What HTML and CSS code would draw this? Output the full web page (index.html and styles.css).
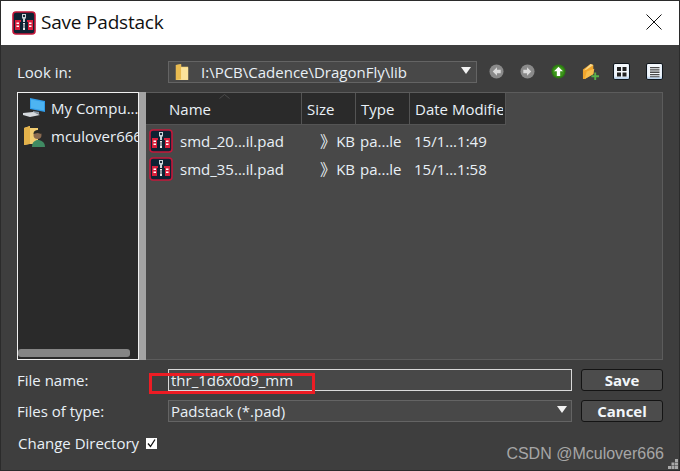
FILE: index.html
```html
<!DOCTYPE html>
<html lang="en">
<head>
<meta charset="utf-8">
<title>Save Padstack</title>
<link rel="stylesheet" href="styles.css">
</head>
<body>
<svg class="defs" width="0" height="0">
  <symbol id="pad" viewBox="0 0 24 24">
    <rect x="1" y="1" width="22" height="22" rx="3" fill="#0e2233" stroke="#c4173a" stroke-width="1.6"/>
    <path d="M3 9h6v2h-1v8H3zM21 9h-6v2h1v8h5z" fill="#d81f3c"/>
    <path d="M4.500 11.500h2.500V13H4.500zM4.500 14.500h2.500V16H4.500zM17 11.500h2.500V13H17zM17 14.500h2.500V16H17z" fill="#fff"/>
    <path d="M10 3h4v4l-1 1v3h-2V8l-1-1z" fill="#c9d2d8"/>
    <rect x="11" y="4" width="2" height="2" fill="#1a2c3a"/>
    <path d="M11 12h2v7h-2z" fill="#e8e8e8"/>
    <rect x="11.600" y="13" width=".8" height="4" fill="#0e2233"/>
  </symbol>
  <symbol id="folder" viewBox="0 0 16 20">
    <path d="M1 2l6-1v3h8v15H6l-5 0z" fill="#f6d77e"/>
    <path d="M1 2l6-1v17l-6 1z" fill="#e9bb50"/>
    <path d="M7 5h8v14H7z" fill="#fbe39b"/>
  </symbol>
  <symbol id="nav" viewBox="0 0 16 16">
    <circle cx="8" cy="8" r="7.500" fill="#8a8a8a"/>
    <path d="M8.500 3.500l-4.500 4.500 4.500 4.500V9.800h4V6.200h-4z" fill="#dcdcdc"/>
  </symbol>
</svg>

<main class="window">
  <header class="titlebar">
    <svg class="app-icon"><use href="#pad"/></svg>
    <h1 class="title">Save Padstack</h1>
    <svg class="close" viewBox="0 0 16 16"><path d="M.5.500l15 15M15.500.500l-15 15" stroke="#111" stroke-width="1" fill="none"/></svg>
  </header>

  <div class="content">
    <div class="lookin-row">
      <span class="label">Look in:</span>
      <div class="combo path-combo">
        <svg class="combo-folder"><use href="#folder"/></svg>
        <span class="path">I:\PCB\Cadence\DragonFly\lib</span>
        <span class="arrow"></span>
      </div>
      <div class="tools">
        <svg class="tool"><use href="#nav"/></svg>
        <svg class="tool flip"><use href="#nav"/></svg>
        <svg class="tool" viewBox="0 0 16 16"><circle cx="8" cy="8" r="7.500" fill="#2c7a12"/><circle cx="8" cy="8" r="6" fill="#3b9419"/><path d="M8 2.800l4.800 5H9.800v5H6.200v-5H3.200z" fill="#fff"/></svg>
        <svg class="tool newdir" viewBox="0 0 18 18"><path d="M1 7l8-6 3 1v9l-9 6H1z" fill="#f0a52c"/><path d="M3 17l2-8 8-3-1 6z" fill="#f7bd4c"/><path d="M9 1l3 1-7 5-3 1z" fill="#f8d98a"/><path d="M13 10h2v3h3v2h-3v3h-2v-3h-3v-2h3z" fill="#58b04a"/></svg>
        <div class="viewbtn">
          <svg viewBox="0 0 15 15"><path d="M3 3h4v4H3zM8.500 3h4v4h-4zM3 8.500h4v4H3zM8.500 8.500h4v4h-4z" fill="#222"/></svg>
        </div>
        <div class="viewbtn">
          <svg viewBox="0 0 15 15"><path d="M3 3h9.500v1.300H3zM3 5.300h9.500v1.300H3zM3 7.600h9.500v1.300H3zM3 9.900h9.500v1.300H3zM3 12.200h9.500v1H3z" fill="#4a4a4a"/></svg>
        </div>
      </div>
    </div>

    <div class="panes">
      <aside class="sidebar">
        <div class="side-item">
          <svg class="side-icon" viewBox="0 0 24 22"><path d="M8 1l15 3v11L8 12z" fill="#2f9be8"/><path d="M9 2.500l13 2.500v8.500L9 11z" fill="#4db4f2"/><path d="M11 14l6 1v2l-6-1z" fill="#8a98a4"/><path d="M1 16l10-1 7 3-10 2-7-2z" fill="#d4d8dc"/></svg>
          <span class="side-text">My Compu...</span>
        </div>
        <div class="side-item">
          <svg class="side-icon" viewBox="0 0 24 24"><path d="M2 4l6-2v2h8v16H7l-5 1z" fill="#f2cd72"/><path d="M2 4l6-2v18l-6 1z" fill="#e4b24a"/><path d="M10 23c0-5 3-7 6-7s7 2 7 7z" fill="#3f8a62"/><circle cx="15.500" cy="11" r="4" fill="#8a6a50"/><path d="M11.500 10c0-3 2-4 4-4s4 1 4 4l-4-1z" fill="#2a2a26"/></svg>
          <span class="side-text">mculover666</span>
        </div>
        <div class="side-scroll"></div>
      </aside>
      <div class="splitter"></div>
      <section class="files">
        <div class="file-head">
          <span class="col col-name">Name<svg class="sort" viewBox="0 0 11 5"><path d="M.5 4.500l5-4 5 4" stroke="#4a4a4a" fill="none"/></svg></span>
          <span class="col col-size">Size</span>
          <span class="col col-type">Type</span>
          <span class="col col-date"><span class="clip">Date Modified</span></span>
        </div>
        <div class="file-row">
          <svg class="file-icon"><use href="#pad"/></svg>
          <span class="f-name">smd_20...il.pad</span>
          <span class="f-size"><span class="chev">》</span>KB</span>
          <span class="f-type">pa...le</span>
          <span class="f-date">15/1...1:49</span>
        </div>
        <div class="file-row">
          <svg class="file-icon"><use href="#pad"/></svg>
          <span class="f-name">smd_35...il.pad</span>
          <span class="f-size"><span class="chev">》</span>KB</span>
          <span class="f-type">pa...le</span>
          <span class="f-date">15/1...1:58</span>
        </div>
      </section>
    </div>

    <div class="form-row row-name">
      <span class="label">File name:</span>
      <div class="combo name-input">thr_1d6x0d9_mm</div>
      <button class="btn">Save</button>
    </div>
    <div class="form-row row-type">
      <span class="label">Files of type:</span>
      <div class="combo type-combo"><span>Padstack (*.pad)</span><span class="arrow"></span></div>
      <button class="btn">Cancel</button>
    </div>
    <div class="change-row">
      <span class="label">Change Directory</span>
      <svg class="check" viewBox="0 0 11 11"><rect width="11" height="11" fill="#fff"/><path d="M2 5.500l2.500 3L9 1.500" stroke="#111" stroke-width="1.300" fill="none"/></svg>
    </div>
  </div>

  <div class="highlight"></div>
  <div class="watermark">CSDN @Mculover666</div>
  <svg class="grip" viewBox="0 0 10 10"><path d="M7 0h3v3H7zM3.500 3.500h3v3h-3zM7 3.500h3v3H7zM0 7h3v3H0zM3.500 7h3v3h-3zM7 7h3v3H7z" fill="#a8a8a8"/></svg>
</main>
</body>
</html>
```
FILE: styles.css
```css
* { box-sizing: border-box; }
html, body { margin: 0; padding: 0; }
body { width: 680px; height: 471px; overflow: hidden; background: #3e3e3e; }
.defs { position: absolute; }

.window {
  position: relative;
  width: 680px;
  height: 471px;
  display: flex;
  flex-direction: column;
  background: #3e3e3e;
  border: 1px solid #2b2b2b;
  color: #e9f0f6;
  font-family: "Open Sans", "Noto Sans", sans-serif;
  font-size: 15px;
}

.titlebar {
  height: 44px;
  flex: none;
  display: flex;
  align-items: center;
  background: #fff;
  padding: 0 17px 0 11px;
}
.app-icon { width: 24px; height: 24px; margin-right: 5px; margin-top: -1px; }
.title {
  flex: 1;
  margin: -3px 0 0;
  color: #111;
  font-size: 19px;
  font-weight: 400;
  letter-spacing: -0.2px;
}
.close { width: 16px; height: 16px; margin-top: -2px; }

.content { flex: 1; display: flex; flex-direction: column; padding: 16px 16px 0; }
.label { width: 151px; flex: none; white-space: nowrap; }

.lookin-row { height: 22px; display: flex; align-items: center; }
.combo {
  display: flex;
  align-items: center;
  height: 22px;
  flex: none;
  background: #484848;
  border: 1px solid #646464;
  white-space: nowrap;
}
.path-combo { width: 309px; padding-left: 6px; }
.combo-folder { width: 14px; height: 20px; flex: none; margin-right: 12px; }
.path { flex: 1; }
.arrow {
  flex: none;
  width: 0;
  height: 0;
  margin: -3px 5px 0 0;
  border-left: 5.500px solid transparent;
  border-right: 5.500px solid transparent;
  border-top: 7px solid #f2f2f2;
}

.tools { display: flex; align-items: center; gap: 16px; margin-left: 12px; flex: none; }
.tool { width: 15px; height: 15px; flex: none; margin-top: -2px; }
.flip { transform: scaleX(-1); }
.newdir { width: 17px; height: 17px; margin-right: -2px; }
.viewbtn {
  width: 17px;
  height: 17px;
  flex: none;
  margin-top: -2px;
  background: #f4f8fc;
  border: 1px solid #10161c;
  border-radius: 2px;
  box-shadow: inset 0 -2px 2px #bcd4ee;
}
.viewbtn svg { display: block; width: 15px; height: 15px; }

.panes { display: flex; height: 268px; margin-top: 9px; }
.sidebar {
  position: relative;
  width: 122px;
  flex: none;
  background: #2a2a2a;
  border: 1px solid #f0f0f0;
  padding-top: 1px;
  overflow: hidden;
}
.side-item { display: flex; align-items: center; height: 28px; padding-left: 4px; white-space: nowrap; }
.side-icon { width: 24px; height: 24px; flex: none; margin-right: 5px; }
.side-scroll {
  position: absolute;
  left: 0;
  bottom: 2px;
  width: 112px;
  height: 8px;
  border-radius: 3px;
  background: #858585;
}
.splitter { width: 7px; flex: none; background: #a3a3a3; }
.files { flex: 1; background: #484848; border: 1px solid #5c5c5c; border-left: 0; }
.file-head { display: flex; height: 32px; }
.col {
  position: relative;
  display: flex;
  align-items: center;
  flex: none;
  background: #2a2a2a;
  border-right: 1px solid #545454;
  border-bottom: 1px solid #545454;
  padding-left: 5px;
  overflow: hidden;
  white-space: nowrap;
}
.col-name { width: 156px; padding-left: 23px; }
.col-size { width: 54px; }
.col-type { width: 54px; }
.col-date { width: 96px; }
.clip { display: block; width: 88px; overflow: hidden; }
.sort { position: absolute; left: 73px; top: 1px; width: 11px; height: 5px; }
.file-row { display: flex; align-items: center; height: 28px; }
.file-head + .file-row { margin-top: 2px; }
.file-icon { width: 24px; height: 24px; flex: none; margin-left: 3px; }
.f-name { width: 133px; padding-left: 7px; flex: none; white-space: nowrap; }
.f-size { width: 54px; flex: none; text-align: right; padding-right: 5px; white-space: nowrap; }
.chev { font-family: "Noto Sans CJK SC", sans-serif; font-size: 16px; line-height: 1; }
.f-type { width: 54px; flex: none; white-space: nowrap; }
.f-date { width: 96px; flex: none; white-space: nowrap; }

.form-row { display: flex; align-items: center; height: 22px; }
.row-name { margin-top: 9px; }
.row-type { margin-top: 9px; }
.name-input { width: 404px; padding-left: 2px; border-color: #d8d8d8; }
.type-combo { width: 404px; padding-left: 2px; justify-content: space-between; }
.type-combo .arrow { margin-right: 4px; }
.btn {
  width: 82px;
  height: 22px;
  margin-left: 9px;
  padding: 0;
  background: #4c4c4c;
  border: 1px solid #141414;
  border-radius: 3px;
  color: #f2f6fa;
  font: 700 15px "Open Sans", "Noto Sans", sans-serif;
}

.change-row { display: flex; align-items: center; margin-top: 11px; height: 20px; }
.change-row .label { width: auto; margin: 0 7px 0 1px; }
.check { width: 11px; height: 11px; }

.highlight {
  position: absolute;
  left: 148px;
  top: 372px;
  width: 166px;
  height: 21px;
  border: 3px solid #ed1c24;
}
.watermark {
  position: absolute;
  right: 15px;
  top: 444px;
  color: #a6a6a6;
  font: 16px "Liberation Sans", sans-serif;
  white-space: nowrap;
}
.grip { position: absolute; right: 1px; bottom: 1px; width: 10px; height: 10px; }
```
